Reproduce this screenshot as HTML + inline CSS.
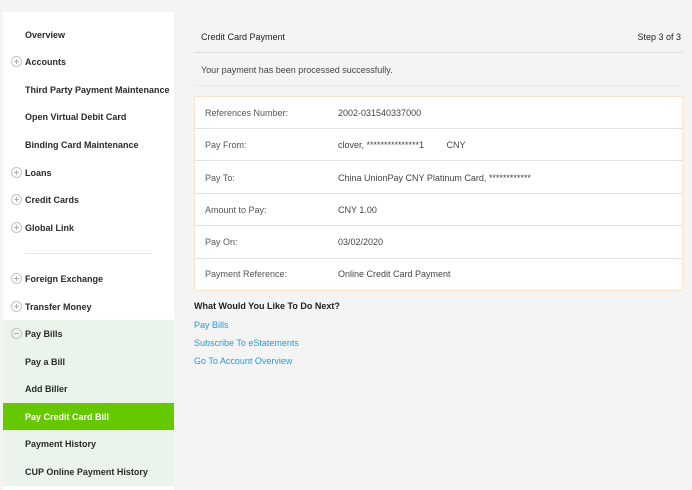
<!DOCTYPE html>
<html><head><meta charset="utf-8"><style>
*{margin:0;padding:0;box-sizing:border-box}
body{width:692px;height:490px;background:#f4f4f4;font-family:"Liberation Sans",Arial,sans-serif;position:relative;overflow:hidden;color:#333}
.side{position:absolute;left:3px;top:12px;width:171px;height:478px;background:#fff}
.it{position:absolute;left:22px;font-size:9px;font-weight:bold;color:#2a2a2a;white-space:nowrap;line-height:12px}
.ic{position:absolute;left:8px;width:11px;height:11px;border:1px solid #c4c4c4;border-radius:50%}
.ic:before{content:"";position:absolute;left:2px;top:4px;width:5px;height:1px;background:#b0b0b0}
.ic.p:after{content:"";position:absolute;left:4px;top:2px;width:1px;height:5px;background:#b0b0b0}
.t{position:absolute;font-size:9px;white-space:nowrap;line-height:12px}
.a{color:#2a9ad6}
</style></head><body>
<div class="side">
<div style="position:absolute;left:0;top:308px;width:171px;height:166px;background:#ebf4ea"></div>
<div style="position:absolute;left:0;top:391px;width:171px;height:27px;background:#66c800"></div>
<div style="position:absolute;left:22px;top:241px;width:127px;height:1px;background:#e6e6e6"></div>
<div class="it" style="top:17px">Overview</div>
<span class="ic p" style="top:44px"></span><div class="it" style="top:44px">Accounts</div>
<div class="it" style="top:72px">Third Party Payment Maintenance</div>
<div class="it" style="top:99px">Open Virtual Debit Card</div>
<div class="it" style="top:127px">Binding Card Maintenance</div>
<span class="ic p" style="top:155px"></span><div class="it" style="top:155px">Loans</div>
<span class="ic p" style="top:182px"></span><div class="it" style="top:182px">Credit Cards</div>
<span class="ic p" style="top:210px"></span><div class="it" style="top:210px">Global Link</div>
<span class="ic p" style="top:261px"></span><div class="it" style="top:261px">Foreign Exchange</div>
<span class="ic p" style="top:289px"></span><div class="it" style="top:289px">Transfer Money</div>
<span class="ic" style="top:316px"></span><div class="it" style="top:316px">Pay Bills</div>
<div class="it" style="top:344px">Pay a Bill</div>
<div class="it" style="top:371px">Add Biller</div>
<div class="it" style="top:399px;color:#fff">Pay Credit Card Bill</div>
<div class="it" style="top:426px">Payment History</div>
<div class="it" style="top:454px">CUP Online Payment History</div>
</div>
<div class="t" style="left:201px;top:31px;color:#222">Credit Card Payment</div>
<div class="t" style="right:11px;top:31px;color:#222">Step 3 of 3</div>
<div style="position:absolute;left:194px;top:52px;width:489px;height:1px;background:#ddd"></div>
<div class="t" style="left:201px;top:64px;color:#444">Your payment has been processed successfully.</div>
<div style="position:absolute;left:194px;top:85px;width:489px;height:1px;background:#e8e8e8"></div>
<div style="position:absolute;left:194px;top:96px;width:489px;height:195px;background:#fff;border:1px solid #fbe3cc"></div>
<div style="position:absolute;left:195px;top:128px;width:487px;height:1px;background:#e2e2e2"></div>
<div style="position:absolute;left:195px;top:160px;width:487px;height:1px;background:#e2e2e2"></div>
<div style="position:absolute;left:195px;top:193px;width:487px;height:1px;background:#e2e2e2"></div>
<div style="position:absolute;left:195px;top:225px;width:487px;height:1px;background:#e2e2e2"></div>
<div style="position:absolute;left:195px;top:258px;width:487px;height:1px;background:#e2e2e2"></div>
<div class="t" style="left:205px;top:107px;color:#555">References Number:</div><div class="t" style="left:338px;top:107px;color:#444">2002-031540337000</div>
<div class="t" style="left:205px;top:139px;color:#555">Pay From:</div><div class="t" style="left:338px;top:139px;color:#444">clover, ***************1&nbsp;&nbsp;&nbsp;&nbsp;&nbsp;&nbsp;&nbsp;&nbsp;&nbsp;CNY</div>
<div class="t" style="left:205px;top:172px;color:#555">Pay To:</div><div class="t" style="left:338px;top:172px;color:#444">China UnionPay CNY Platinum Card, ************</div>
<div class="t" style="left:205px;top:204px;color:#555">Amount to Pay:</div><div class="t" style="left:338px;top:204px;color:#444">CNY 1.00</div>
<div class="t" style="left:205px;top:236px;color:#555">Pay On:</div><div class="t" style="left:338px;top:236px;color:#444">03/02/2020</div>
<div class="t" style="left:205px;top:268px;color:#555">Payment Reference:</div><div class="t" style="left:338px;top:268px;color:#444">Online Credit Card Payment</div>
<div class="t" style="left:194px;top:300px;color:#222;font-weight:bold">What Would You Like To Do Next?</div>
<div class="t a" style="left:194px;top:319px">Pay Bills</div>
<div class="t a" style="left:194px;top:337px">Subscribe To eStatements</div>
<div class="t a" style="left:194px;top:355px">Go To Account Overview</div>
</body></html>
